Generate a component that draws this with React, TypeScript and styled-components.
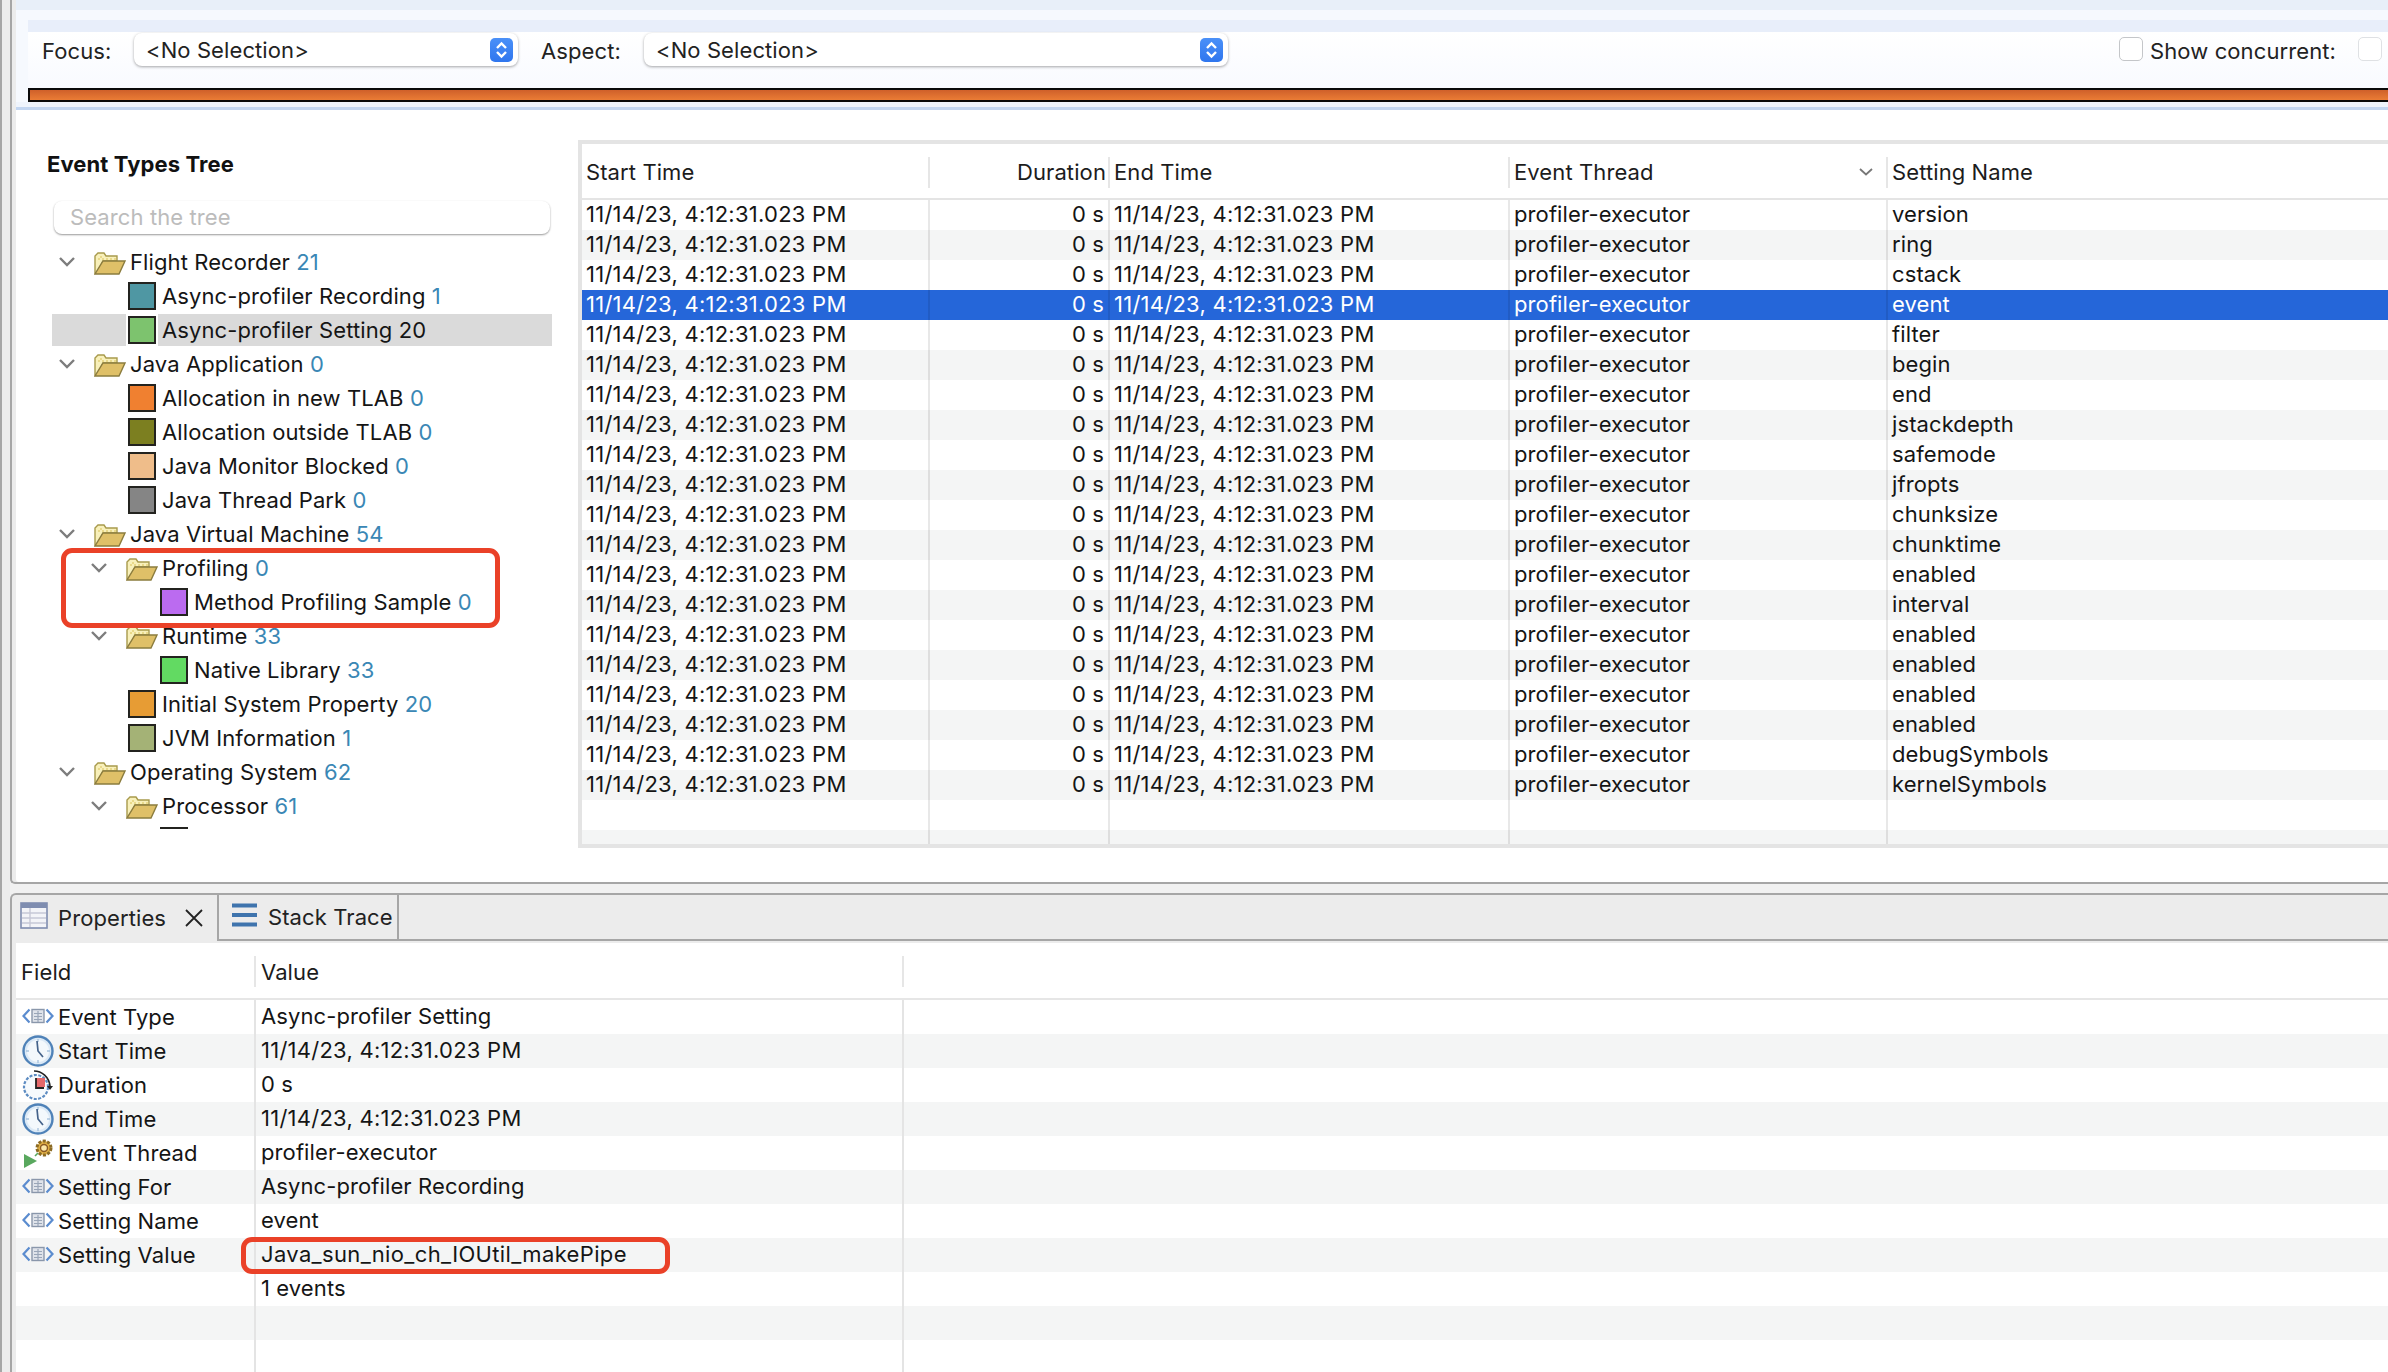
import React from 'react';
import styled, { createGlobalStyle } from 'styled-components';

const GlobalStyle = createGlobalStyle`
    html, body {
        margin: 0;
        padding: 0;
        background: #ececec;
        font-family: Inter, 'Liberation Sans', sans-serif;
        font-size: 22px;
        letter-spacing: 0.1px;
        color: #151515;
    }
`;

const Page = styled.div`
    display: flex;
    width: 2388px;
    height: 1372px;
    overflow: hidden;
`;
const Rail = styled.div`
    width: 10px;
    flex-shrink: 0;
    border-left: 2px solid #a6a6a6;
    box-sizing: border-box;
    background: #ececec;
`;
const Main = styled.div`
    flex: 1;
    min-width: 0;
    display: flex;
    flex-direction: column;
    background: #f1f1f1;
`;
const UpperPane = styled.div`
    height: 884px;
    flex-shrink: 0;
    box-sizing: border-box;
    display: flex;
    flex-direction: column;
    border-left: 2px solid #a6a6a6;
    border-bottom: 2px solid #a6a6a6;
    border-bottom-left-radius: 5px;
    background: #fff;
    box-shadow: inset 4px 0 0 #ececec;
    padding-left: 4px;
`;

/* toolbar */
const TopStrip = styled.div`
    height: 10px;
    background: #e8eff9;
`;
const Toolbar = styled.div`
    background: #f6f9fe;
    padding: 10px 0 0 12px;
`;
const ToolbarTitle = styled.div`
    height: 12px;
    background: #e8eefa;
`;
const FilterRow = styled.div`
    height: 56px;
    box-sizing: border-box;
    display: flex;
    align-items: flex-start;
    padding: 1px 6px 0 14px;
    background: linear-gradient(#fff, #f8faff);
`;
const FilterLabel = styled.label<{ $width: number; $gap?: number }>`
    width: ${(p) => p.$width}px;
    margin-left: ${(p) => p.$gap ?? 0}px;
    height: 37px;
    line-height: 37px;
    flex-shrink: 0;
    color: #222;
`;
const Select = styled.div<{ $width: number }>`
    width: ${(p) => p.$width}px;
    height: 33px;
    box-sizing: border-box;
    display: flex;
    align-items: center;
    justify-content: space-between;
    padding: 0 5px 0 12px;
    background: #fff;
    border-radius: 8px;
    box-shadow: 0 1px 3px rgba(0, 0, 0, 0.35);
    color: #222;
`;
const SelectButton = styled.span`
    width: 23px;
    height: 24px;
    border-radius: 5px;
    background: linear-gradient(#4a90f8, #2f76ee);
    display: flex;
    align-items: center;
    justify-content: center;
`;
const RightGroup = styled.div`
    margin-left: auto;
    display: flex;
    align-items: flex-start;
    padding-top: 4px;
`;
const Checkbox = styled.span<{ $faint?: boolean }>`
    width: 24px;
    height: 24px;
    box-sizing: border-box;
    background: #fff;
    border: 1.5px solid ${(p) => (p.$faint ? '#dfe1e4' : '#c4c6c9')};
    border-radius: 5px;
`;
const CheckboxLabel = styled.span`
    line-height: 28px;
    margin: 0 22px 0 7px;
    color: #222;
`;
const OrangeBar = styled.div`
    height: 14px;
    box-sizing: border-box;
    border: 2px solid #0a0a0a;
    border-right: 0;
    background: linear-gradient(#cf602a, #ea7c35);
`;
const ToolbarFoot = styled.div`
    height: 8px;
    box-sizing: border-box;
    margin-left: -12px;
    border-bottom: 3px solid #c3d6f1;
    background: #eff4fc;
`;

/* split area */
const Split = styled.div`
    flex: 1;
    min-height: 0;
    display: flex;
`;
const TreePane = styled.div`
    width: 562px;
    flex-shrink: 0;
    padding-left: 36px;
    box-sizing: border-box;
`;
const TreeTitle = styled.h2`
    margin: 41px 0 0 -5px;
    font-size: 22px;
    line-height: 26px;
    font-weight: 700;
    color: #111;
`;
const SearchBox = styled.div`
    width: 496px;
    height: 33px;
    margin: 24px 0 11px 2px;
    box-sizing: border-box;
    padding-left: 16px;
    line-height: 33px;
    color: #bcbcbc;
    background: #fff;
    border-radius: 8px;
    box-shadow: 0 1px 2px rgba(0, 0, 0, 0.4);
`;
const Tree = styled.div`
    position: relative;
    width: 500px;
    height: 584px;
    box-sizing: border-box;
    padding-top: 1px;
    display: flex;
    flex-direction: column;
    gap: 2px;
    overflow: hidden;
`;
const TreeRow = styled.div<{ $depth: number; $selected?: boolean }>`
    height: 32px;
    flex-shrink: 0;
    display: flex;
    align-items: center;
    padding-left: ${(p) => 7 + p.$depth * 32}px;
    background: ${(p) => (p.$selected ? '#dadada' : 'transparent')};
    white-space: nowrap;
`;
const ChevronSlot = styled.span`
    width: 35px;
    flex-shrink: 0;
    display: flex;
    align-items: center;
`;
const FolderSlot = styled.span`
    width: 36px;
    display: flex;
    margin-top: 2px;
    flex-shrink: 0;
`;
const SwatchSlot = styled.span`
    width: 32px;
    height: 100%;
    margin-right: 4px;
    flex-shrink: 0;
    background: #fff;
    display: flex;
    align-items: center;
    justify-content: center;
`;
const Swatch = styled.span<{ $color: string }>`
    width: 28px;
    height: 28px;
    box-sizing: border-box;
    border: 2.5px solid #23231f;
    background: ${(p) => p.$color};
`;
const Count = styled.span`
    color: #3a87b5;
`;
const Callout = styled.div`
    position: absolute;
    box-sizing: border-box;
    border: 5px solid #ea4128;
    border-radius: 11px;
    pointer-events: none;
`;
const TreeCallout = styled(Callout)`
    left: 9px;
    top: 303px;
    width: 439px;
    height: 80px;
`;
const ClippedSwatch = styled.span`
    position: absolute;
    left: 108px;
    top: 582px;
    width: 28px;
    height: 3px;
    background: #23231f;
`;

/* event table */
const TableFrame = styled.div`
    flex: 1;
    min-width: 0;
    height: 708px;
    margin-top: 30px;
    box-sizing: border-box;
    border: 4px solid #e4e4e4;
    border-right: 0;
    display: flex;
    flex-direction: column;
    overflow: hidden;
`;
const EVENT_COLUMNS = '348px 180px 400px 378px 1fr';
const EventHead = styled.div`
    display: grid;
    grid-template-columns: ${EVENT_COLUMNS};
    height: 56px;
    flex-shrink: 0;
    box-sizing: border-box;
    border-bottom: 2px solid #e4e4e4;
`;
const HeadCell = styled.div<{ $right?: boolean; $pad?: number; $last?: boolean }>`
    position: relative;
    display: flex;
    align-items: center;
    justify-content: ${(p) => (p.$right ? 'flex-end' : 'space-between')};
    padding: 2px ${(p) => (p.$right ? 4 : 0)}px 0 ${(p) => p.$pad ?? 4}px;
    color: #1c1c1c;
    &::after {
        content: '';
        display: ${(p) => (p.$last ? 'none' : 'block')};
        position: absolute;
        right: 0;
        top: 13px;
        height: 31px;
        width: 2px;
        background: #e6e6e6;
    }
`;
const EventRows = styled.div`
    flex: 1;
    display: flex;
    flex-direction: column;
`;
const EventRow = styled.div<{ $striped: boolean; $selected?: boolean; $short?: boolean }>`
    display: grid;
    grid-template-columns: ${EVENT_COLUMNS};
    height: 30px;
    flex: ${(p) => (p.$short ? '1' : 'none')};
    line-height: 29px;
    white-space: nowrap;
    background: ${(p) => (p.$selected ? '#2566d9' : p.$striped ? '#f4f5f5' : '#fff')};
    color: ${(p) => (p.$selected ? '#fff' : '#151515')};
`;
const EventCell = styled.div<{ $right?: boolean; $last?: boolean }>`
    padding: 0 ${(p) => (p.$right ? 4 : 0)}px 0 4px;
    text-align: ${(p) => (p.$right ? 'right' : 'left')};
    border-right: ${(p) => (p.$last ? '0' : '2px solid rgba(0, 0, 0, 0.09)')};
    overflow: hidden;
`;
const Wide = styled.span`
    letter-spacing: 0.25px;
`;
const Wider = styled.span`
    letter-spacing: 0.35px;
`;

/* properties view */
const LowerPane = styled.div`
    flex: 1;
    min-height: 0;
    margin-top: 9px;
    display: flex;
    flex-direction: column;
    border-left: 2px solid #a6a6a6;
    border-top: 2px solid #a6a6a6;
    border-top-left-radius: 6px;
    background: #ececec;
`;
const TabBar = styled.div`
    height: 46px;
    flex-shrink: 0;
    display: flex;
`;
const Tab = styled.div<{ $active?: boolean; $width: number }>`
    width: ${(p) => p.$width}px;
    flex-shrink: 0;
    box-sizing: border-box;
    display: flex;
    align-items: center;
    padding-left: ${(p) => (p.$active ? 8 : 13)}px;
    border-right: 2px solid #a6a6a6;
    border-bottom: ${(p) => (p.$active ? '0' : '2px solid #a6a6a6')};
    color: #222;
`;
const TabIcon = styled.span`
    display: flex;
    margin-top: -5px;
`;
const TabLabel = styled.span<{ $left: number }>`
    margin-left: ${(p) => p.$left}px;
`;
const TabClose = styled.span`
    margin-left: auto;
    margin-right: 14px;
    display: flex;
`;
const TabRest = styled.div`
    flex: 1;
    border-bottom: 2px solid #a6a6a6;
`;
const PropsWrap = styled.div`
    position: relative;
    flex: 1;
    min-height: 0;
    margin: 2px 0 0 4px;
    background: #fff;
    display: flex;
    flex-direction: column;
`;
const PROP_COLUMNS = '240px 648px 1fr';
const PropHead = styled.div`
    display: grid;
    grid-template-columns: ${PROP_COLUMNS};
    height: 57px;
    flex-shrink: 0;
    box-sizing: border-box;
    border-bottom: 2px solid #e6e6e6;
    color: #1c1c1c;
`;
const PropRow = styled.div<{ $striped: boolean; $grow?: boolean }>`
    display: grid;
    grid-template-columns: ${PROP_COLUMNS};
    height: 34px;
    flex: ${(p) => (p.$grow ? '1' : 'none')};
    line-height: 33px;
    background: ${(p) => (p.$striped ? '#f4f5f5' : '#fff')};
    color: #151515;
    white-space: nowrap;
`;
const PropCell = styled.div<{ $last?: boolean }>`
    padding-left: 5px;
    border-right: ${(p) => (p.$last ? '0' : '2px solid #e4e4e4')};
`;
const FieldCell = styled(PropCell)`
    display: flex;
    align-items: center;
    padding-left: 6px;
`;
const FieldIcon = styled.span`
    width: 32px;
    margin-right: 4px;
    flex-shrink: 0;
    display: flex;
    justify-content: center;
`;
const ValueCallout = styled(Callout)`
    left: 225px;
    top: 294px;
    width: 429px;
    height: 37px;
`;

/* drawings */
const Chevron = () => (
    <svg width="16" height="10" viewBox="0 0 16 10">
        <path d="M1 1l7 7 7-7" fill="none" stroke="#7d7d7d" strokeWidth="2.4" />
    </svg>
);
const SortChevron = () => (
    <svg width="14" height="8" viewBox="0 0 14 8" style={{ marginRight: 15 }}>
        <path d="M1 1l6 5.5L13 1" fill="none" stroke="#777" strokeWidth="1.8" />
    </svg>
);
const UpDown = () => (
    <svg width="13" height="18" viewBox="0 0 13 18">
        <path d="M2 7l4.5-4.5L11 7M2 11l4.5 4.5L11 11" fill="none" stroke="#fff" strokeWidth="2.4" />
    </svg>
);
const Folder = () => (
    <svg width="32" height="23" viewBox="0 0 32 23">
        <path d="M1 21V4l3-3h6l2 3h11v5H9L3 21z" fill="#f8f0ba" stroke="#a89a4c" strokeWidth="1.4" />
        <path d="M4 6h2v2H4zM8 6h2v2H8zM12 6h2v2h-2zM16 6h2v2h-2zM20 6h2v2h-2zM6 4h2v2H6z" fill="#e9d98a" />
        <path d="M9 9h22l-6 13H1z" fill="#dfc068" stroke="#8b7c3e" strokeWidth="1.4" />
    </svg>
);
const CloseIcon = () => (
    <svg width="18" height="18" viewBox="0 0 18 18">
        <path d="M1 1l16 16M17 1L1 17" stroke="#222" strokeWidth="1.8" />
    </svg>
);
const TableIcon = () => (
    <svg width="28" height="27" viewBox="0 0 28 27">
        <rect x="1" y="1" width="26" height="25" fill="#f3f4f8" stroke="#7f8db0" strokeWidth="1.6" />
        <rect x="1" y="1" width="26" height="5" fill="#7f8db0" />
        <path d="M2 11h24M2 16h24M2 21h24" stroke="#c6c8d6" strokeWidth="1.6" />
        <path d="M10 6v19" stroke="#c6c8d6" strokeWidth="1.4" />
    </svg>
);
const StackIcon = () => (
    <svg width="25" height="24" viewBox="0 0 25 24">
        <path d="M0 2.5h25M0 12h25M0 21.5h25" stroke="#3f74ad" strokeWidth="4" />
    </svg>
);
const ClassIcon = () => (
    <svg width="32" height="16" viewBox="0 0 32 16" style={{ marginTop: -2 }}>
        <path d="M7.5 1.5L1.5 8l6 6.5M24.5 1.5l6 6.5-6 6.5" fill="none" stroke="#5b8ccf" strokeWidth="2.2" />
        <rect x="10" y="1.5" width="12" height="13" fill="#dfe3ea" stroke="#8a97ab" strokeWidth="1.4" />
        <path d="M12 5.5h8M12 8.5h8M12 11.5h8M16 3v11" stroke="#9aa6b8" strokeWidth="1.2" />
    </svg>
);
const ClockIcon = () => (
    <svg width="32" height="32" viewBox="0 0 32 32">
        <circle cx="16" cy="16" r="14.5" fill="#dbe9f6" stroke="#4f82b8" strokeWidth="2.4" />
        <circle cx="16" cy="16" r="11" fill="#f3f8fc" />
        <path d="M16 4v3M16 25v3M4 16h3M25 16h3" stroke="#a9c3de" strokeWidth="1.4" />
        <path d="M15 6l1 10 5 6" fill="none" stroke="#44628a" strokeWidth="1.7" />
    </svg>
);
const DurationIcon = () => (
    <svg width="32" height="30" viewBox="0 0 32 30">
        <circle cx="14" cy="17" r="12" fill="#f6fafd" stroke="#5d8cc2" strokeWidth="2.2" strokeDasharray="3 1.5" />
        <path d="M14 8h9v9h-9z" fill="#e4686b" />
        <path d="M14 8v10h8" fill="none" stroke="#222" strokeWidth="1.8" />
        <path d="M12 1c8 0 15 6 16 15" fill="none" stroke="#222" strokeWidth="1.6" />
        <path d="M25 16h6l-3 4z" fill="#222" />
    </svg>
);
const ThreadIcon = () => (
    <svg width="32" height="34" viewBox="0 0 32 34">
        <path d="M2 18l13 7-13 7z" fill="#59a85e" />
        <path d="M13 20l3-3" stroke="#59a85e" strokeWidth="1.6" />
        <circle cx="22" cy="12" r="7" fill="#e2b146" stroke="#8b6a24" strokeWidth="3" strokeDasharray="3 1.5" />
        <circle cx="22" cy="12" r="3.5" fill="#fbe7a8" stroke="#8b5a24" strokeWidth="1.4" />
    </svg>
);

type TreeItem = { depth: number; label: string; count: string; color?: string; selected?: boolean };

const treeItems: TreeItem[] = [
    { depth: 0, label: 'Flight Recorder', count: '21' },
    { depth: 1, label: 'Async-profiler Recording', count: '1', color: '#4f97a3' },
    { depth: 1, label: 'Async-profiler Setting', count: '20', color: '#7dc36e', selected: true },
    { depth: 0, label: 'Java Application', count: '0' },
    { depth: 1, label: 'Allocation in new TLAB', count: '0', color: '#f08030' },
    { depth: 1, label: 'Allocation outside TLAB', count: '0', color: '#7c7f20' },
    { depth: 1, label: 'Java Monitor Blocked', count: '0', color: '#efbd8a' },
    { depth: 1, label: 'Java Thread Park', count: '0', color: '#858585' },
    { depth: 0, label: 'Java Virtual Machine', count: '54' },
    { depth: 1, label: 'Profiling', count: '0' },
    { depth: 2, label: 'Method Profiling Sample', count: '0', color: '#bb6bf0' },
    { depth: 1, label: 'Runtime', count: '33' },
    { depth: 2, label: 'Native Library', count: '33', color: '#62da62' },
    { depth: 1, label: 'Initial System Property', count: '20', color: '#e79c34' },
    { depth: 1, label: 'JVM Information', count: '1', color: '#a4b276' },
    { depth: 0, label: 'Operating System', count: '62' },
    { depth: 1, label: 'Processor', count: '61' },
];

const settingNames = [
    'version', 'ring', 'cstack', 'event', 'filter', 'begin', 'end', 'jstackdepth', 'safemode', 'jfropts',
    'chunksize', 'chunktime', 'enabled', 'interval', 'enabled', 'enabled', 'enabled', 'enabled',
    'debugSymbols', 'kernelSymbols',
];

const STAMP = '11/14/23, 4:12:31.023 PM';

const properties: { icon?: React.ReactNode; field: string; value: React.ReactNode }[] = [
    { icon: <ClassIcon />, field: 'Event Type', value: 'Async-profiler Setting' },
    { icon: <ClockIcon />, field: 'Start Time', value: <Wide>{STAMP}</Wide> },
    { icon: <DurationIcon />, field: 'Duration', value: '0 s' },
    { icon: <ClockIcon />, field: 'End Time', value: <Wide>{STAMP}</Wide> },
    { icon: <ThreadIcon />, field: 'Event Thread', value: 'profiler-executor' },
    { icon: <ClassIcon />, field: 'Setting For', value: 'Async-profiler Recording' },
    { icon: <ClassIcon />, field: 'Setting Name', value: 'event' },
    { icon: <ClassIcon />, field: 'Setting Value', value: <Wider>Java_sun_nio_ch_IOUtil_makePipe</Wider> },
    { field: '', value: '1 events' },
    { field: '', value: '' },
];

const App = () => {
    return (
        <Page>
            <GlobalStyle />
            <Rail />
            <Main>
                <UpperPane>
                    <TopStrip />
                    <Toolbar>
                        <ToolbarTitle />
                        <FilterRow>
                            <FilterLabel $width={92}>Focus:</FilterLabel>
                            <Select $width={384}>
                                {'<No Selection>'}
                                <SelectButton>
                                    <UpDown />
                                </SelectButton>
                            </Select>
                            <FilterLabel $width={103} $gap={23}>
                                Aspect:
                            </FilterLabel>
                            <Select $width={584}>
                                {'<No Selection>'}
                                <SelectButton>
                                    <UpDown />
                                </SelectButton>
                            </Select>
                            <RightGroup>
                                <Checkbox />
                                <CheckboxLabel>Show concurrent:</CheckboxLabel>
                                <Checkbox $faint />
                            </RightGroup>
                        </FilterRow>
                        <OrangeBar />
                        <ToolbarFoot />
                    </Toolbar>
                    <Split>
                        <TreePane>
                            <TreeTitle>Event Types Tree</TreeTitle>
                            <SearchBox>Search the tree</SearchBox>
                            <Tree>
                                {treeItems.map((item) => (
                                    <TreeRow key={item.label} $depth={item.depth} $selected={item.selected}>
                                        {item.color ? (
                                            <>
                                                <ChevronSlot />
                                                <SwatchSlot>
                                                    <Swatch $color={item.color} />
                                                </SwatchSlot>
                                            </>
                                        ) : (
                                            <>
                                                <ChevronSlot>
                                                    <Chevron />
                                                </ChevronSlot>
                                                <FolderSlot>
                                                    <Folder />
                                                </FolderSlot>
                                            </>
                                        )}
                                        <span>
                                            {item.label}{' '}
                                            {item.selected ? item.count : <Count>{item.count}</Count>}
                                        </span>
                                    </TreeRow>
                                ))}
                                <ClippedSwatch />
                                <TreeCallout />
                            </Tree>
                        </TreePane>
                        <TableFrame>
                            <EventHead>
                                <HeadCell>Start Time</HeadCell>
                                <HeadCell $right>Duration</HeadCell>
                                <HeadCell>End Time</HeadCell>
                                <HeadCell>
                                    Event Thread
                                    <SortChevron />
                                </HeadCell>
                                <HeadCell $last>Setting Name</HeadCell>
                            </EventHead>
                            <EventRows>
                                {settingNames.map((name, i) => (
                                    <EventRow key={i} $striped={i % 2 === 1} $selected={i === 3}>
                                        <EventCell>
                                            <Wide>{STAMP}</Wide>
                                        </EventCell>
                                        <EventCell $right>0 s</EventCell>
                                        <EventCell>
                                            <Wide>{STAMP}</Wide>
                                        </EventCell>
                                        <EventCell>profiler-executor</EventCell>
                                        <EventCell $last>{name}</EventCell>
                                    </EventRow>
                                ))}
                                <EventRow $striped={false}>
                                    <EventCell />
                                    <EventCell />
                                    <EventCell />
                                    <EventCell />
                                    <EventCell $last />
                                </EventRow>
                                <EventRow $striped $short>
                                    <EventCell />
                                    <EventCell />
                                    <EventCell />
                                    <EventCell />
                                    <EventCell $last />
                                </EventRow>
                            </EventRows>
                        </TableFrame>
                    </Split>
                </UpperPane>
                <LowerPane>
                    <TabBar>
                        <Tab $active $width={207}>
                            <TabIcon>
                                <TableIcon />
                            </TabIcon>
                            <TabLabel $left={10}>Properties</TabLabel>
                            <TabClose>
                                <CloseIcon />
                            </TabClose>
                        </Tab>
                        <Tab $width={180}>
                            <TabIcon>
                                <StackIcon />
                            </TabIcon>
                            <TabLabel $left={11}>Stack Trace</TabLabel>
                        </Tab>
                        <TabRest />
                    </TabBar>
                    <PropsWrap>
                        <PropHead>
                            <HeadCell $pad={5}>Field</HeadCell>
                            <HeadCell $pad={5}>Value</HeadCell>
                            <HeadCell $last />
                        </PropHead>
                        {properties.map((row, i) => (
                            <PropRow key={i} $striped={i % 2 === 1}>
                                <FieldCell>
                                    {row.icon && <FieldIcon>{row.icon}</FieldIcon>}
                                    {row.field}
                                </FieldCell>
                                <PropCell>{row.value}</PropCell>
                                <PropCell $last />
                            </PropRow>
                        ))}
                        <PropRow $striped={false} $grow>
                            <PropCell />
                            <PropCell />
                            <PropCell $last />
                        </PropRow>
                        <ValueCallout />
                    </PropsWrap>
                </LowerPane>
            </Main>
        </Page>
    );
};

export default App;
